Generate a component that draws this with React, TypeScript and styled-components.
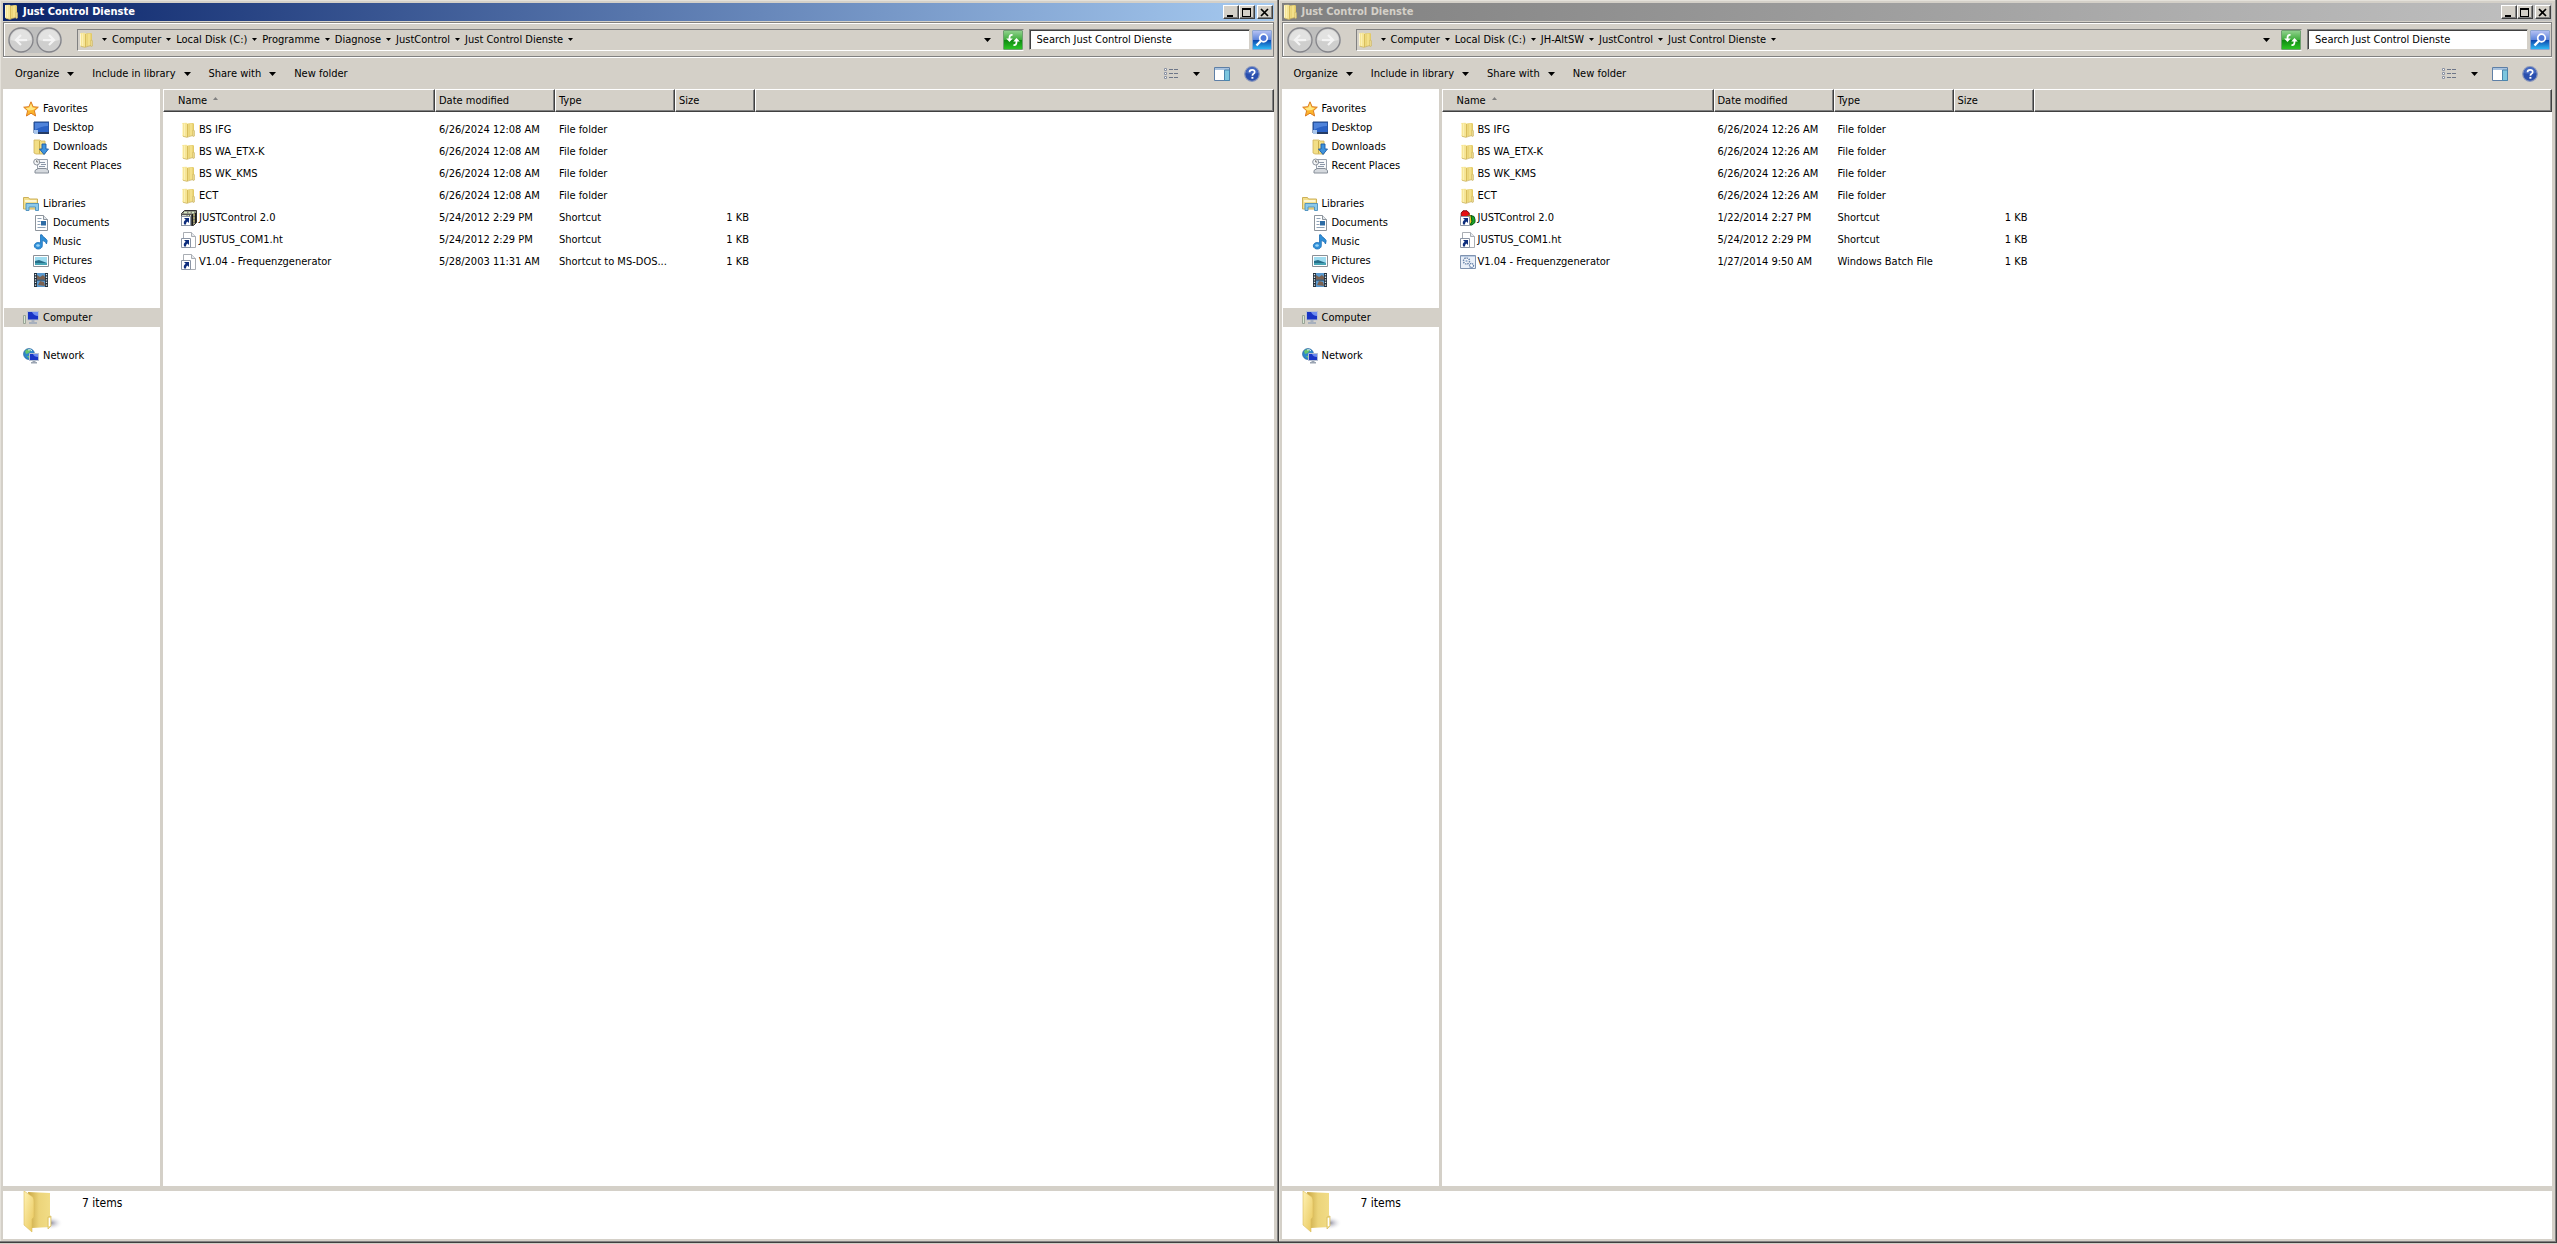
import React from "react";
import styled, { createGlobalStyle, css } from "styled-components";

const face = "#d4d0c8";
const shade = "#808080";
const dark = "#404040";

const GlobalStyle = createGlobalStyle`
  *, *::before, *::after { box-sizing: border-box; }
  html, body, #root { height: 100%; }
  body {
    margin: 0;
    background: ${face};
    color: #000;
    font: 11px/14px "DejaVu Sans Condensed", "DejaVu Sans", sans-serif;
  }
  button, input { font: inherit; color: inherit; }
`;

const Desktop = styled.main`
  display: grid;
  grid-template-columns: 1fr 1fr;
  height: 100%;
  padding-bottom: 1px;
`;

const Window = styled.section`
  display: flex;
  flex-direction: column;
  min-width: 0;
  padding: 3px 4px 3px 3px;
  background: ${face};
  border: solid ${dark};
  border-width: 0 1px 1px 0;
  box-shadow: inset -1px -1px ${shade}, inset 1px 1px #e4e1da;
`;

const TitleBar = styled.header<{ $active: boolean }>`
  display: flex;
  align-items: center;
  gap: 3px;
  height: 18px;
  padding: 0 1px 0 1px;
  color: ${(p) => (p.$active ? "#fff" : face)};
  background: ${(p) =>
    p.$active
      ? "linear-gradient(90deg, #0a246a, #a6caf0)"
      : "linear-gradient(90deg, #808080, #c0c0c0)"};
`;

const Title = styled.h1`
  flex: 1;
  margin: 0;
  font-size: 11px;
  font-weight: bold;
  line-height: 14px;
`;

const Caption = styled.div`
  display: flex;
`;

const CaptionButton = styled.button`
  display: grid;
  place-items: center;
  width: 16px;
  height: 14px;
  padding: 0;
  color: #000;
  background: ${face};
  border: 1px solid;
  border-color: #fff ${dark} ${dark} #fff;
  box-shadow: inset -1px -1px ${shade};
  &:last-child { margin-left: 2px; }
`;

const groove = css`
  border: 1px solid ${shade};
  box-shadow: inset 1px 1px #fff, 0 1px #fff;
`;

const NavBar = styled.div`
  display: flex;
  align-items: center;
  height: 35px;
  margin: 1px 0;
  padding: 0 1px 0 4px;
  ${groove}
`;

const History = styled.div`
  display: flex;
  gap: 2px;
  margin-right: 15px;
  background: #bfbfbe;
  border-radius: 13px;
`;

const RoundButton = styled.button`
  width: 26px;
  height: 26px;
  padding: 0;
  border: 0;
  background: none;
  svg { display: block; }
`;

const Address = styled.nav`
  display: flex;
  flex: 1;
  align-items: center;
  height: 22px;
  padding-left: 1px;
  border: 1px solid;
  border-color: ${shade} ${face} #fff ${shade};
`;

const Crumbs = styled.ol`
  display: flex;
  flex: 1;
  margin: 0;
  padding: 0 0 0 2px;
  list-style: none;
`;

const Crumb = styled.li`
  display: flex;
  align-items: center;
  a { color: inherit; text-decoration: none; }
`;

const ArrowButton = styled.button<{ $wide?: boolean }>`
  display: grid;
  place-items: center;
  width: ${(p) => (p.$wide ? "30px" : "15px")};
  height: 16px;
  padding: 0;
  border: 0;
  background: none;
`;

const GlossButton = styled.button<{ $tone: "green" | "blue" }>`
  display: grid;
  place-items: center;
  flex: none;
  width: 20px;
  height: 20px;
  padding: 0;
  border: 1px solid ${(p) => (p.$tone === "green" ? "#6f9f70" : "#8fa6cf")};
  border-radius: 1px;
  background: ${(p) =>
    p.$tone === "green"
      ? "linear-gradient(#8fd08c, #3fae3c 48%, #0f8a12 52%, #2cc424)"
      : "linear-gradient(#b4c0f2, #5f86dc 48%, #0c48b0 52%, #2fb8f4)"};
`;

const SearchBox = styled.form`
  display: flex;
  align-items: center;
  gap: 2px;
  width: 243px;
  margin-left: 5px;
`;

const SearchInput = styled.input`
  flex: 1;
  min-width: 0;
  height: 21px;
  padding: 0 7px;
  border: 1px solid;
  border-color: ${shade} ${face} ${face} ${shade};
  box-shadow: inset 1px 1px ${dark};
  background: #fff;
  &::placeholder { color: #000; opacity: 1; }
`;

const Toolbar = styled.div`
  display: flex;
  align-items: center;
  height: 31px;
  padding: 0 14px 0 12px;
`;

const ToolMenu = styled.button`
  display: flex;
  align-items: center;
  gap: 8px;
  margin-right: 18px;
  padding: 0;
  border: 0;
  background: none;
`;

const ToolIcon = styled.button`
  display: grid;
  place-items: center;
  height: 18px;
  margin-left: 14px;
  padding: 0;
  border: 0;
  background: none;
  &:first-child { margin: 0; }
`;

const ToolRight = styled.div`
  display: flex;
  align-items: center;
  margin-left: auto;
`;

const Body = styled.div`
  display: flex;
  flex: 1;
  gap: 3px;
  min-height: 0;
`;

const Sidebar = styled.nav`
  flex: none;
  width: 157px;
  padding: 10px 0 0 1px;
  background: #fff;
`;

const TreeGroup = styled.ul`
  margin: 0 0 19px;
  padding: 0;
  list-style: none;
`;

const TreeLink = styled.a<{ $child?: boolean; $selected?: boolean }>`
  display: flex;
  align-items: center;
  gap: 4px;
  height: 19px;
  padding-left: ${(p) => (p.$child ? "29px" : "19px")};
  color: inherit;
  text-decoration: none;
  background: ${(p) => (p.$selected ? face : "none")};
`;

const Listing = styled.div`
  flex: 1;
  min-width: 0;
  background: #fff;
`;

const FileTable = styled.table`
  width: 100%;
  table-layout: fixed;
  border-collapse: separate;
  border-spacing: 0;
`;

const HeadCell = styled.th<{ $width?: number }>`
  width: ${(p) => (p.$width ? `${p.$width}px` : "auto")};
  height: 23px;
  padding: 1px 0 0 3px;
  text-align: left;
  font-weight: normal;
  background: ${face};
  border: 1px solid;
  border-color: #fff ${dark} ${dark} #fff;
  box-shadow: inset -1px -1px ${shade};
  &:first-child { padding-left: 14px; }
  svg { margin: 0 0 4px 6px; }
`;

const Row = styled.tr`
  height: 22px;
`;

const Spacer = styled.tr`
  height: 7px;
`;

const Cell = styled.td<{ $right?: boolean }>`
  padding: 0 6px 0 4px;
  overflow: hidden;
  white-space: nowrap;
  text-overflow: ellipsis;
  text-align: ${(p) => (p.$right ? "right" : "left")};
`;

const FileName = styled.a`
  display: flex;
  align-items: center;
  gap: 2px;
  padding-left: 14px;
  color: inherit;
  text-decoration: none;
`;

const Status = styled.footer`
  display: flex;
  gap: 19px;
  height: 48px;
  margin-top: 5px;
  padding: 0 0 0 20px;
  background: #fff;
  font-size: 12px;
  line-height: 24px;
`;

const Down = ({ size = 7 }: { size?: 5 | 7 }) => (
  <svg width={size} height={size === 7 ? 4 : 3} viewBox="0 0 8 4" preserveAspectRatio="none">
    <path d="M0 0h8L4 4z" />
  </svg>
);

const FolderIcon = () => (
  <svg width="16" height="16" viewBox="0 0 16 16">
    <path d="M7 1.500L12 1l1 .8V13l-6 1.500z" fill="#e3ca66" />
    <path d="M8.500 1.800L11.500 1.400v12L8.500 14z" fill="#f3e08a" />
    <path d="M1 1l4.500-.3L7.500 2v12.500L6 15.500 2 14.500l-1-1z" fill="#f6e596" />
    <path d="M1.500 1.500v12" stroke="#fff7cf" />
    <path d="M3.500 1.500v12.500" stroke="#fbf0b4" />
    <path d="M6.500 2v13" stroke="#d8bd5b" />
    <path d="M2 14.300l4 1 6.500-2" fill="none" stroke="#c9b060" strokeWidth=".7" />
    <path d="M12 8l1.500.7V14l-1.500.6z" fill="#f4e6a4" stroke="#c9b260" strokeWidth=".6" />
  </svg>
);

const BigFolderIcon = () => (
  <svg width="40" height="44" viewBox="0 0 40 44">
    <defs>
      <linearGradient id="flap" x1="0" x2="1" y2="1">
        <stop offset="0" stopColor="#fff2b4" />
        <stop offset="1" stopColor="#e8c659" />
      </linearGradient>
      <linearGradient id="back" x1="0" x2="1">
        <stop offset="0" stopColor="#c9a743" />
        <stop offset=".5" stopColor="#ecd47a" />
        <stop offset="1" stopColor="#f1dc86" />
      </linearGradient>
      <radialGradient id="drop">
        <stop offset="0" stopColor="#8d8da0" />
        <stop offset="1" stopColor="#fff" stopOpacity="0" />
      </radialGradient>
    </defs>
    <ellipse cx="28" cy="32" rx="12" ry="7" fill="url(#drop)" />
    <path d="M5 1l22 1v34l-18 1z" fill="url(#back)" />
    <path d="M25 26l3-1v10l-3 3z" fill="#f5e292" stroke="#d5b95c" strokeWidth=".7" />
    <path d="M26.500 27v8" stroke="#fff" strokeWidth="1.500" />
    <path d="M1 0l9 6q1 2 1 6v14l-2 2v13L1 34z" fill="url(#flap)" stroke="#dcbd5c" strokeWidth=".6" />
  </svg>
);

const Overlay = () => (
  <>
    <path d="M.500 6.500h9v9h-9z" fill="#fff" stroke="#8b95a5" />
    <path d="M3 8h5v5L6.400 11.400q-1.600 1-1.400 3.100H3.200Q1.800 11.500 4.700 9.700z" fill="#0d2d7d" />
  </>
);

const ShortcutIcon = () => (
  <svg width="16" height="16" viewBox="0 0 16 16">
    <path d="M2.500.500h8l4 4v11h-12z" fill="#fff" stroke="#a9adb3" />
    <path d="M10.500.500v4h4" fill="#e5e8ec" stroke="#a9adb3" />
    <Overlay />
  </svg>
);

const BoxShortcutIcon = () => (
  <svg width="16" height="16" viewBox="0 0 16 16">
    <path d="M.500 3.500l3-3h12v12l-3 3H.500z" fill="#8c8c80" stroke="#333" />
    <path d="M.500 4.500h10v11H.500z" fill="#d9d9d0" stroke="#555" />
    <path d="M3 2.500h3M7.500 2.500h2M11 2.500h2" stroke="#d7ecc4" strokeWidth="1.500" />
    <path d="M6 5v2M8.500 5v3" stroke="#6d7b40" />
    <path d="M11.500 4v11M14.500 3v10" stroke="#1c1c1c" strokeWidth="1.400" />
    <path d="M13 4v10" stroke="#c9be68" strokeDasharray="2 1" />
    <Overlay />
  </svg>
);

const LightsShortcutIcon = () => (
  <svg width="16" height="16" viewBox="0 0 16 16">
    <path d="M3 .8h4L9.200 3v4H1.200V3z" fill="#e60f12" stroke="#7b1014" />
    <path d="M8 5l4 1v8l-3 1z" fill="#f1cf25" stroke="#7c6a10" />
    <path d="M11 5.500l3 1 1 3v3l-3 2.500h-2l2-3.500z" fill="#19a52a" stroke="#0a5a14" />
    <Overlay />
  </svg>
);

const BatchIcon = () => (
  <svg width="16" height="16" viewBox="0 0 16 16">
    <path d="M.500 1.500h15v13H.500z" fill="#e9eff8" stroke="#7f93b0" />
    <path d="M1 2.500h14" stroke="#b9cbe3" />
    <circle cx="6.500" cy="7" r="3" fill="#fff" stroke="#6c87ad" strokeWidth="1.500" strokeDasharray="1.500 .8" />
    <circle cx="6.500" cy="7" r="1.200" fill="#9db4d4" />
    <circle cx="11.500" cy="11.500" r="2" fill="#fff" stroke="#5c7aa5" strokeWidth="1.300" strokeDasharray="1.200 .6" />
  </svg>
);

const StarIcon = () => (
  <svg width="16" height="16" viewBox="0 0 16 16">
    <path d="M8 .8l2.100 4.900 5.200.5-3.900 3.500 1.200 5.300L8 12.200 3.400 15l1.200-5.300L.7 6.200l5.200-.5z" fill="#fbb52c" stroke="#dd7c22" />
    <path d="M8 2.500l1.500 4 3.500.4-3 2.100-4.500.5-3-2.500 3.900-.5z" fill="#ffe884" />
  </svg>
);

const DesktopIcon = () => (
  <svg width="16" height="16" viewBox="0 0 16 16">
    <path d="M1 2h15v11H1z" fill="#2b62c5" stroke="#264a86" />
    <path d="M2 3h13v3Q8 6 2 10z" fill="#4f83da" />
    <path d="M1 12h15v2H1z" fill="#243c66" />
    <path d="M1 10h4v4H1z" fill="#a9c6ec" />
  </svg>
);

const DownloadsIcon = () => (
  <svg width="16" height="16" viewBox="0 0 16 16">
    <path d="M1 1h6l1 1h4v13H3l-2-1z" fill="#f2de86" stroke="#cfb35a" strokeWidth=".8" />
    <path d="M6.500 2v12.500" stroke="#cbae4c" />
    <path d="M9 5h4v5h2.500L11 15.500 6.500 10H9z" fill="#3f93dc" stroke="#1b5ba8" strokeWidth=".9" />
  </svg>
);

const RecentIcon = () => (
  <svg width="16" height="16" viewBox="0 0 16 16">
    <path d="M4.500 1.500h10v11h-10z" fill="#f7f8fa" stroke="#9aa2ad" />
    <path d="M7 4.500h5M8 6.500h5M6 8.500h6" stroke="#8b97a8" />
    <path d="M2 12.500l3-2h8l2.500 2v2.500H2z" fill="#d5d9de" stroke="#868e99" />
    <circle cx="3.700" cy="4" r="3" fill="#f2f4f6" stroke="#8d949e" />
    <path d="M3.700 2.200V4h1.500" fill="none" stroke="#555" strokeWidth=".8" />
  </svg>
);

const LibrariesIcon = () => (
  <svg width="16" height="16" viewBox="0 0 16 16">
    <path d="M.500 1.500h5l1 1.500H14.500v10H.500z" fill="#f3df8c" stroke="#cdb058" />
    <path d="M2 4h11.500v2H2z" fill="#fff6cf" />
    <path d="M3 7.500h12.500v7H12.500v-3.500H6v3.500H3z" fill="#8cc9ea" stroke="#4b8fbd" strokeWidth=".9" />
  </svg>
);

const DocumentsIcon = () => (
  <svg width="16" height="16" viewBox="0 0 16 16">
    <path d="M2.500.500h8l4 4v11h-12z" fill="#fff" stroke="#8d949c" />
    <path d="M10.500.500v4h4" fill="#e3e7ec" stroke="#8d949c" />
    <path d="M4.500 3.500h4M4.500 6.500h3M4.500 9.500h3M4.500 12.500h8" stroke="#8fa3b8" />
    <path d="M8 6h5v4.500H8z" fill="#2e6ca5" />
  </svg>
);

const MusicIcon = () => (
  <svg width="16" height="16" viewBox="0 0 16 16">
    <path d="M7.500.8H9q.5 2 3 3.200 3.500 2 1.500 6Q13 7 9.300 6.500v5.300A4 3.300 0 1 1 7.500 9z" fill="#2f8fd8" stroke="#1c6fb6" strokeWidth=".8" />
    <ellipse cx="5" cy="11.500" rx="1.800" ry="1.200" fill="#9bd4f6" />
  </svg>
);

const PicturesIcon = () => (
  <svg width="16" height="16" viewBox="0 0 16 16">
    <path d="M.500 2.500h15v11H.500z" fill="#fff" stroke="#8a9097" />
    <path d="M2 4h12v8H2z" fill="#9fdcf0" />
    <path d="M2 8l4-1 8 3v2H2z" fill="#276f8a" />
    <path d="M2 10h12v2H2z" fill="#45a3b4" />
  </svg>
);

const VideosIcon = () => (
  <svg width="16" height="16" viewBox="0 0 16 16">
    <path d="M1 1h14v14H1z" fill="#22303d" />
    <path d="M4 1h8v6.500H4zM4 8.500h8V15H4z" fill="#5b9ad0" />
    <path d="M4 3l3 2 3-2 2 2v2.500H4zM5 13l2-4 4 1 1 4z" fill="#7b6150" />
    <path d="M2.500 2v13M13.500 2v13" stroke="#dfe6ec" strokeWidth="1.300" strokeDasharray="1.300 1.300" />
  </svg>
);

const ComputerIcon = () => (
  <svg width="16" height="16" viewBox="0 0 16 16">
    <path d="M.500 5.500h2v8h-2z" fill="#d9e8d4" stroke="#8a978a" strokeWidth=".8" />
    <path d="M4.500 1.500h11v8.500h-11z" fill="#1733c4" stroke="#b9c2d2" />
    <path d="M9 2h6v4q-4 0-6-4z" fill="#6d8cf0" />
    <path d="M8.500 10h3v2h-3zM6 12h8v2H6z" fill="#a7b0bd" />
  </svg>
);

const NetworkIcon = () => (
  <svg width="16" height="16" viewBox="0 0 16 16">
    <circle cx="6" cy="6" r="5.500" fill="#2f86c9" stroke="#1c5b97" strokeWidth=".6" />
    <path d="M2 3q3-3 6-1L6 5 3 6zM4 8l3 0 0 3z" fill="#66c46c" />
    <path d="M5 2q3-1 4 1" stroke="#e0f3fb" fill="none" />
    <path d="M6.500 5.500h9v7h-9z" fill="#1a36c6" stroke="#b5bfd0" />
    <path d="M10 6h5v3q-4 0-5-3z" fill="#6b8af0" />
    <path d="M9.500 13h3v1h-3zM8 14h6v1.500H8z" fill="#9aa4b2" />
  </svg>
);

const RoundArrow = ({ flip }: { flip?: boolean }) => (
  <svg width="26" height="26" viewBox="0 0 26 26">
    <circle cx="13" cy="13" r="12" fill="#cfcfce" stroke="#85858a" strokeWidth="1.300" />
    <path d="M2.500 13a10.500 10.500 0 0 1 21 0q-10 3-21 0z" fill="#e2e2e1" />
    <path
      d={flip ? "M7 13h11M13 8l5 5-5 5" : "M19 13H8M13 8l-5 5 5 5"}
      fill="none"
      stroke="#f4f4f4"
      strokeWidth="2.200"
    />
  </svg>
);

const RefreshIcon = () => (
  <svg width="16" height="14" viewBox="0 0 16 14">
    <path d="M7.500 2Q4.500 1.500 4.500 5v1" fill="none" stroke="#fff" strokeWidth="1.800" />
    <path d="M1.200 5.500h6.600L4.500 9z" fill="#fff" />
    <path d="M8.500 12q3 .5 3-3V8" fill="none" stroke="#fff" strokeWidth="1.800" />
    <path d="M8.200 8.500h6.600L11.500 5z" fill="#fff" />
  </svg>
);

const MagnifierIcon = () => (
  <svg width="16" height="16" viewBox="0 0 16 16">
    <circle cx="9.500" cy="6" r="3.800" fill="#5078d8" stroke="#fff" strokeWidth="1.700" />
    <path d="M6.800 9L2.500 13.500" stroke="#fff" strokeWidth="2.400" />
  </svg>
);

const ViewIcon = () => (
  <svg width="16" height="14" viewBox="0 0 16 14">
    <path d="M1.500 1.500h2v2h-2zM1.500 5.500h2v2h-2zM1.500 9.500h2v2h-2z" fill="#fff" stroke="#8b92a3" />
    <path d="M6 2.500h4M11 2.500h4M6 6.500h4M11 6.500h4M6 10.500h4M11 10.500h4" stroke="#6d7688" />
  </svg>
);

const PaneIcon = () => (
  <svg width="16" height="14" viewBox="0 0 16 14">
    <path d="M.500.500h15v13H.500z" fill="#fff" stroke="#5e7fa6" />
    <path d="M1 1h14v2H1z" fill="#a9c2de" />
    <path d="M10.500 3h5v10.500h-5z" fill="#7cc6de" stroke="#4a86ad" />
  </svg>
);

const HelpIcon = () => (
  <svg width="16" height="16" viewBox="0 0 16 16">
    <circle cx="8" cy="8" r="7.300" fill="#2a4fae" stroke="#8a97bb" strokeWidth="1.200" />
    <path d="M2 7a6 6 0 0 1 12 0q-6 2-12 0z" fill="#4468c0" />
    <path d="M5.500 6.200q0-2.400 2.600-2.400t2.600 2.200q0 1.200-1.400 2-.9.600-.9 1.700" fill="none" stroke="#fff" strokeWidth="1.700" />
    <path d="M7.400 10.900h2v1.800h-2z" fill="#fff" />
  </svg>
);

type Item = { icon: React.ReactNode; label: string };
const places: { head: Item; items: Item[]; selected?: boolean }[] = [
  {
    head: { icon: <StarIcon />, label: "Favorites" },
    items: [
      { icon: <DesktopIcon />, label: "Desktop" },
      { icon: <DownloadsIcon />, label: "Downloads" },
      { icon: <RecentIcon />, label: "Recent Places" },
    ],
  },
  {
    head: { icon: <LibrariesIcon />, label: "Libraries" },
    items: [
      { icon: <DocumentsIcon />, label: "Documents" },
      { icon: <MusicIcon />, label: "Music" },
      { icon: <PicturesIcon />, label: "Pictures" },
      { icon: <VideosIcon />, label: "Videos" },
    ],
  },
  { head: { icon: <ComputerIcon />, label: "Computer" }, items: [], selected: true },
  { head: { icon: <NetworkIcon />, label: "Network" }, items: [] },
];

type Entry = { icon: React.ReactNode; name: string; date: string; type: string; size?: string };

const folders = (date: string): Entry[] =>
  ["BS IFG", "BS WA_ETX-K", "BS WK_KMS", "ECT"].map((name) => ({
    icon: <FolderIcon />,
    name,
    date,
    type: "File folder",
  }));

const leftFiles: Entry[] = [
  ...folders("6/26/2024 12:08 AM"),
  { icon: <BoxShortcutIcon />, name: "JUSTControl 2.0", date: "5/24/2012 2:29 PM", type: "Shortcut", size: "1 KB" },
  { icon: <ShortcutIcon />, name: "JUSTUS_COM1.ht", date: "5/24/2012 2:29 PM", type: "Shortcut", size: "1 KB" },
  { icon: <ShortcutIcon />, name: "V1.04 - Frequenzgenerator", date: "5/28/2003 11:31 AM", type: "Shortcut to MS-DOS...", size: "1 KB" },
];

const rightFiles: Entry[] = [
  ...folders("6/26/2024 12:26 AM"),
  { icon: <LightsShortcutIcon />, name: "JUSTControl 2.0", date: "1/22/2014 2:27 PM", type: "Shortcut", size: "1 KB" },
  { icon: <ShortcutIcon />, name: "JUSTUS_COM1.ht", date: "5/24/2012 2:29 PM", type: "Shortcut", size: "1 KB" },
  { icon: <BatchIcon />, name: "V1.04 - Frequenzgenerator", date: "1/27/2014 9:50 AM", type: "Windows Batch File", size: "1 KB" },
];

const Explorer = ({ active, path, files }: { active: boolean; path: string[]; files: Entry[] }) => (
  <Window>
    <TitleBar $active={active}>
      <FolderIcon />
      <Title>Just Control Dienste</Title>
      <Caption>
        <CaptionButton aria-label="Minimize">
          <svg width="10" height="9" viewBox="0 0 10 9"><path d="M1 7h6v2H1z" /></svg>
        </CaptionButton>
        <CaptionButton aria-label="Maximize">
          <svg width="10" height="9" viewBox="0 0 10 9"><path d="M0 0h9v9H0zM1 2v6h7V2z" fillRule="evenodd" /></svg>
        </CaptionButton>
        <CaptionButton aria-label="Close">
          <svg width="10" height="9" viewBox="0 0 10 9"><path d="M1 1l7 7M8 1L1 8" stroke="#000" strokeWidth="1.700" /></svg>
        </CaptionButton>
      </Caption>
    </TitleBar>

    <NavBar>
      <History>
        <RoundButton aria-label="Back"><RoundArrow /></RoundButton>
        <RoundButton aria-label="Forward"><RoundArrow flip /></RoundButton>
      </History>
      <Address aria-label="Address">
        <FolderIcon />
        <Crumbs>
          <Crumb><ArrowButton aria-label="Root"><Down size={5} /></ArrowButton></Crumb>
          {path.map((part) => (
            <Crumb key={part}>
              <a href="#path">{part}</a>
              <ArrowButton aria-label={`Open ${part}`}><Down size={5} /></ArrowButton>
            </Crumb>
          ))}
        </Crumbs>
        <ArrowButton $wide aria-label="Previous locations"><Down /></ArrowButton>
        <GlossButton $tone="green" aria-label="Refresh"><RefreshIcon /></GlossButton>
      </Address>
      <SearchBox role="search">
        <SearchInput aria-label="Search" placeholder="Search Just Control Dienste" />
        <GlossButton $tone="blue" type="button" aria-label="Start search"><MagnifierIcon /></GlossButton>
      </SearchBox>
    </NavBar>

    <Toolbar>
      {["Organize", "Include in library", "Share with"].map((label) => (
        <ToolMenu key={label}>{label}<Down /></ToolMenu>
      ))}
      <ToolMenu>New folder</ToolMenu>
      <ToolRight>
        <ToolIcon aria-label="Change view"><ViewIcon /></ToolIcon>
        <ToolIcon aria-label="More view options"><Down /></ToolIcon>
        <ToolIcon aria-label="Preview pane"><PaneIcon /></ToolIcon>
        <ToolIcon aria-label="Help"><HelpIcon /></ToolIcon>
      </ToolRight>
    </Toolbar>

    <Body>
      <Sidebar aria-label="Places">
        {places.map(({ head, items, selected }) => (
          <TreeGroup key={head.label}>
            <li><TreeLink href="#place" $selected={selected}>{head.icon}{head.label}</TreeLink></li>
            {items.map((item) => (
              <li key={item.label}><TreeLink href="#place" $child>{item.icon}{item.label}</TreeLink></li>
            ))}
          </TreeGroup>
        ))}
      </Sidebar>
      <Listing>
        <FileTable>
          <thead>
            <tr>
              <HeadCell $width={272}>
                Name
                <svg width="5" height="3" viewBox="0 0 5 3"><path d="M0 3h5L2.500 0z" fill={shade} /></svg>
              </HeadCell>
              <HeadCell $width={120}>Date modified</HeadCell>
              <HeadCell $width={120}>Type</HeadCell>
              <HeadCell $width={80}>Size</HeadCell>
              <HeadCell as="td" />
            </tr>
          </thead>
          <tbody>
            <Spacer />
            {files.map((file) => (
              <Row key={file.name}>
                <Cell><FileName href="#file">{file.icon}{file.name}</FileName></Cell>
                <Cell>{file.date}</Cell>
                <Cell>{file.type}</Cell>
                <Cell $right>{file.size}</Cell>
              </Row>
            ))}
          </tbody>
        </FileTable>
      </Listing>
    </Body>

    <Status>
      <BigFolderIcon />
      <span>7 items</span>
    </Status>
  </Window>
);

export default function App() {
  return (
    <>
      <GlobalStyle />
      <Desktop>
        <Explorer
          active
          path={["Computer", "Local Disk (C:)", "Programme", "Diagnose", "JustControl", "Just Control Dienste"]}
          files={leftFiles}
        />
        <Explorer
          active={false}
          path={["Computer", "Local Disk (C:)", "JH-AltSW", "JustControl", "Just Control Dienste"]}
          files={rightFiles}
        />
      </Desktop>
    </>
  );
}
